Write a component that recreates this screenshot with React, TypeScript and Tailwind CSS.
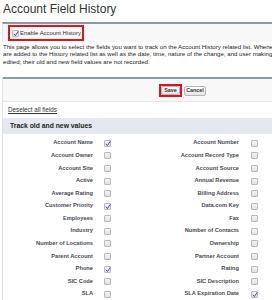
import React from "react";

const left: [string, boolean][] = [
  ["Account Name", true],
  ["Account Owner", false],
  ["Account Site", false],
  ["Active", false],
  ["Average Rating", false],
  ["Customer Priority", true],
  ["Employees", false],
  ["Industry", false],
  ["Number of Locations", false],
  ["Parent Account", false],
  ["Phone", true],
  ["SIC Code", false],
  ["SLA", false],
];
const right: [string, boolean][] = [
  ["Account Number", false],
  ["Account Record Type", false],
  ["Account Source", false],
  ["Annual Revenue", false],
  ["Billing Address", false],
  ["Data.com Key", false],
  ["Fax", false],
  ["Number of Contacts", false],
  ["Ownership", false],
  ["Partner Account", false],
  ["Rating", false],
  ["SIC Description", false],
  ["SLA Expiration Date", true],
];

function Box({ checked }: { checked: boolean }) {
  return (
    <div className="w-[7px] h-[7px] border border-[#b9b9b9] bg-gradient-to-b from-[#f4f4f4] to-[#e2e2e2] rounded-[1px] relative shrink-0">
      {checked && (
        <svg viewBox="0 0 10 10" className="absolute left-[0px] top-[-1px] w-[6px] h-[7px]">
          <path d="M1.5 5.5 L4 8.5 L8.8 1.2" fill="none" stroke="#3b4cb0" strokeWidth="1.6" />
        </svg>
      )}
    </div>
  );
}

export default function App() {
  return (
    <div className="w-[272px] h-[300px] overflow-hidden bg-white text-[#222]" style={{ fontFamily: '"Liberation Sans", Arial, sans-serif' }}>
      <div className="h-[22px] pl-[3px] pt-[2px] text-[12px] leading-[15px] text-[#333] whitespace-nowrap">Account Field History</div>

      <div className="ml-[2px] h-[20px] border-t-2 border-t-[#8c97a9] border-l border-l-[#dfe2e6] bg-[#f8f8f8] pt-[1px] pl-[5px]">
        <div className="w-[76px] h-[16px] border-2 border-[#e1141e] flex items-center pl-[2px] gap-[1px] bg-[#f8f8f8]">
          <Box checked={true} />
          <span className="text-[5.9px] leading-[7px] text-[#333] whitespace-nowrap">Enable Account History</span>
        </div>
      </div>

      <div className="h-[35px] pl-[3px] pt-[1px] text-[6.1px] leading-[7.4px] text-[#222] whitespace-nowrap overflow-hidden">
        <div>This page allows you to select the fields you want to track on the Account History related list. Whenever</div>
        <div>are added to the History related list as well as the date, time, nature of the change, and user making</div>
        <div>edited; their old and new field values are not recorded.</div>
      </div>

      <div className="ml-[2px] border-l border-l-[#dfe2e6]">
        <div className="h-[25px] border-t-2 border-t-[#8c97a9] border-b border-b-[#e6e6e6] bg-[#f8f8f8] flex items-start pt-[5px] pl-[156px] gap-[2px]">
          <div className="w-[23px] h-[13px] border-2 border-[#e1141e] flex items-center justify-center">
            <div className="w-[19px] h-[9px] border border-[#b5b5b5] rounded-[2px] bg-gradient-to-b from-[#ffffff] to-[#e6e6e6] flex items-center justify-center text-[5.4px] font-bold text-[#333] leading-none">Save</div>
          </div>
          <div className="mt-[2px] w-[22px] h-[10px] border border-[#b5b5b5] rounded-[2px] bg-gradient-to-b from-[#ffffff] to-[#e6e6e6] flex items-center justify-center text-[5.4px] font-bold text-[#333] leading-none">Cancel</div>
        </div>

        <div className="h-[16px] flex items-center pl-[5px]">
          <span className="text-[6.3px] leading-none underline text-[#333] whitespace-nowrap">Deselect all fields</span>
        </div>

        <div className="h-[16px] bg-[#e5e8ee] flex items-center pl-[7px]">
          <span className="text-[6.8px] font-bold leading-none text-[#222] whitespace-nowrap">Track old and new values</span>
        </div>

        <div className="pt-[3px]">
          {left.map(([l, lc], i) => {
            const [r, rc] = right[i];
            return (
              <div key={l} className="h-[12.58px] flex items-center">
                <div className="w-[90px] text-right text-[5.7px] font-bold text-[#4a4a56] whitespace-nowrap leading-none">{l}</div>
                <div className="ml-[11px]"><Box checked={lc} /></div>
                <div className="w-[128px] text-right text-[5.7px] font-bold text-[#4a4a56] whitespace-nowrap leading-none">{r}</div>
                <div className="ml-[12px]"><Box checked={rc} /></div>
              </div>
            );
          })}
        </div>
      </div>
    </div>
  );
}
